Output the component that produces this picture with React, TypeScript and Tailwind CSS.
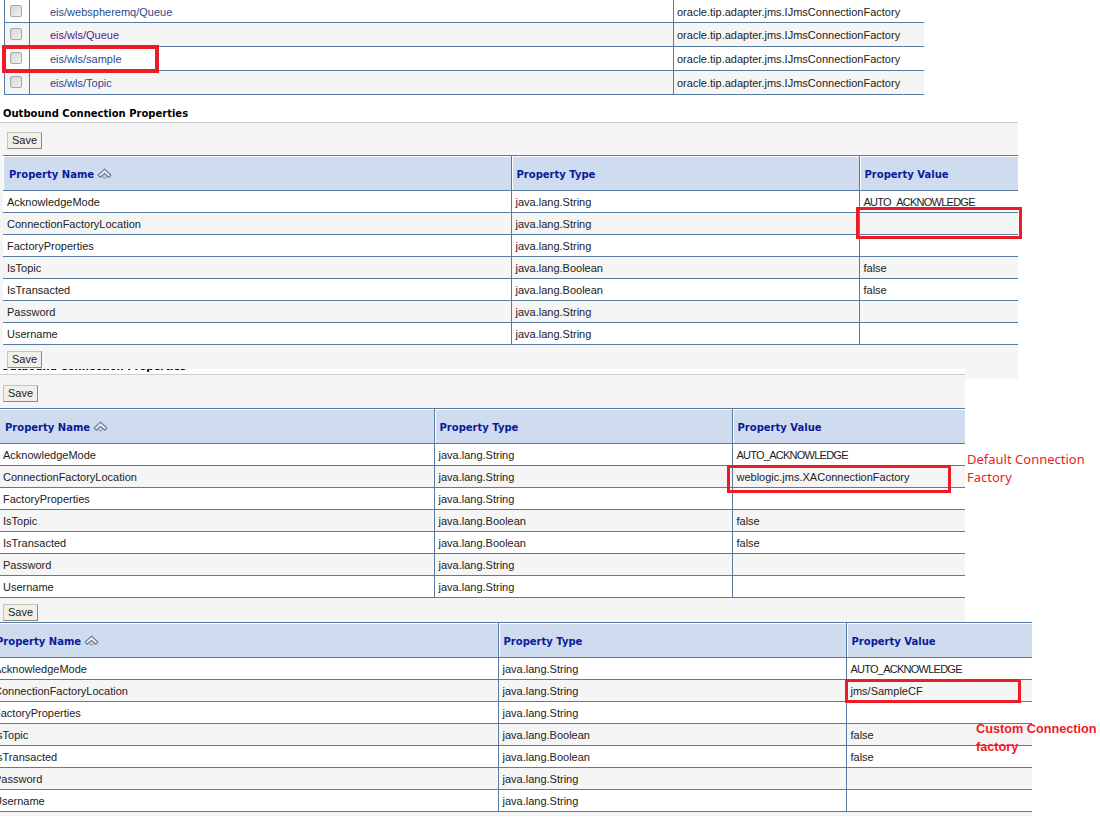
import React from "react";

const font = "font-['Liberation_Sans',sans-serif]";
const rowLine = "border-b border-[#5a7ba0]";

const baseRows = [
  ["AcknowledgeMode", "java.lang.String", "AUTO_ACKNOWLEDGE"],
  ["ConnectionFactoryLocation", "java.lang.String", ""],
  ["FactoryProperties", "java.lang.String", ""],
  ["IsTopic", "java.lang.Boolean", "false"],
  ["IsTransacted", "java.lang.Boolean", "false"],
  ["Password", "java.lang.String", ""],
  ["Username", "java.lang.String", ""],
];

const SortIcon = () => (
  <svg width="15" height="11" viewBox="0 0 14 10" className="inline-block ml-[3px] -mt-[2px]" fill="none">
    <path d="M7 1 13 6.5 11 8.5 7 5 3 8.5 1 6.5Z" fill="#e6ecf5" stroke="#62758f" strokeWidth="1" />
    <path d="M4.5 7.5 7 9.5 9.5 7.5" stroke="#8a9ab0" strokeWidth="1" />
  </svg>
);

const SaveButton = ({ className }: { className: string }) => (
  <button className={`h-[17px] w-[35px] flex items-center justify-center bg-[#f0f0e8] border border-[#c4c4b8] border-b-[#8a8a80] border-r-[#8a8a80] rounded-[1px] text-[11px] text-[#222] ${className}`}>
    Save
  </button>
);

function PropsTable({ cols, ml, value, width }: { cols: string[]; ml: string; value?: string; width: string }) {
  return (
    <table className={`table-fixed border-collapse border-t border-[#5a7ba0] ${ml} ${width} text-[11px] text-[#222]`}>
      <colgroup>
        <col className={cols[0]} />
        <col className={cols[1]} />
        <col />
      </colgroup>
      <thead>
        <tr className={`h-[35px] bg-[#cfdbee] ${rowLine}`}>
          {["Property Name", "Property Type", "Property Value"].map((h, i) => (
            <th key={h} className={`pt-[3px] text-left text-[10px] font-bold whitespace-nowrap font-['DejaVu_Sans',sans-serif] text-[#0a1a9a] shadow-[inset_1px_1px_0_#fff] ${i > 0 ? "pl-[5px] border-l border-[#5a7ba0]" : "pl-[6px]"}`}>
              {h}
              {i === 0 && <SortIcon />}
            </th>
          ))}
        </tr>
      </thead>
      <tbody>
        {baseRows.map((r, i) => (
          <tr key={r[0]} className={`h-[22px] ${rowLine} ${i % 2 ? "bg-[#f5f5f5]" : "bg-white"}`}>
            <td className="pl-[4px] pt-[2px] whitespace-nowrap">{r[0]}</td>
            <td className="pl-[4px] pt-[2px] border-l border-[#5a7ba0]">{r[1]}</td>
            <td className={`pl-[4px] pt-[2px] border-l border-[#5a7ba0] whitespace-nowrap ${i === 0 ? "tracking-[-0.75px]" : ""}`}>{i === 1 ? value : r[2]}</td>
          </tr>
        ))}
      </tbody>
    </table>
  );
}

const Checkbox = () => (
  <span className="block w-[12px] h-[12px] ml-[5px] rounded-[2px] border border-[#a9a9a9] bg-gradient-to-br from-[#d4d4d4] to-[#f2f2f2]" />
);

const links = [
  { label: "eis/webspheremq/Queue", color: "text-[#2a4a8f]" },
  { label: "eis/wls/Queue", color: "text-[#5a1a8b]" },
  { label: "eis/wls/sample", color: "text-[#2a4a8f]" },
  { label: "eis/wls/Topic", color: "text-[#2a4a8f]" },
];

export default function App() {
  return (
    <div className={`relative w-[1100px] h-[827px] overflow-hidden bg-white ${font}`}>
      {/* connection factory list */}
      <table className="table-fixed border-collapse ml-1 w-[920px] text-[11px] border-l border-[#5a7ba0]">
        <colgroup>
          <col className="w-[25px]" />
          <col className="w-[644px]" />
          <col />
        </colgroup>
        <tbody>
          {links.map((l, i) => (
            <tr key={l.label} className={`${i === 0 ? "h-[22px]" : "h-[24px]"} ${rowLine} ${i % 2 ? "bg-[#f5f5f5]" : "bg-white"}`}>
              <td><Checkbox /></td>
              <td className={`pl-5 pt-[2px] border-l border-[#5a7ba0] ${l.color}`}>{l.label}</td>
              <td className="pl-[3px] pt-[2px] border-l border-[#5a7ba0] text-[#222]">oracle.tip.adapter.jms.IJmsConnectionFactory</td>
            </tr>
          ))}
        </tbody>
      </table>

      <h2 className="mt-[12px] ml-[3px] h-[15px] text-[10px] leading-[14px] font-bold font-['DejaVu_Sans',sans-serif] text-black">
        Outbound Connection Properties
      </h2>

      {/* first panel, no factory set */}
      <div className="w-[1018px] h-[257px] bg-[#f5f5f5] border-t border-[#ccc] pt-[9px]">
        <SaveButton className="ml-[7px]" />
        <div className="h-[6px]" />
        <PropsTable cols={["w-[508px]", "w-[348px]"]} ml="ml-[3px]" width="w-[1015px]" />
        <SaveButton className="ml-[7px] mt-[6px]" />
      </div>

      {/* second panel, pasted over the one above */}
      <div className="-mt-[10px] w-[965px] h-[5px] bg-white relative overflow-hidden">
        <p className="-mt-[9px] ml-[1px] text-[10px] leading-[14px] font-bold font-['DejaVu_Sans',sans-serif] text-black">
          Outbound Connection Properties
        </p>
      </div>
      <div className="relative w-[965px] h-[248px] bg-[#f5f5f5] border-t border-[#ccc] pt-[10px]">
        <SaveButton className="ml-[3px]" />
        <div className="h-[6px]" />
        <PropsTable cols={["w-[435px]", "w-[298px]"]} ml="-ml-px" width="w-[966px]" value="weblogic.jms.XAConnectionFactory" />
        <SaveButton className="ml-[3px] mt-[6px]" />
      </div>

      {/* third panel, table runs past the left edge */}
      <div className="relative w-[1032px] h-[194px] bg-[#f5f5f5] overflow-hidden">
        <PropsTable cols={["w-[508px]", "w-[348px]"]} ml="-ml-[10px]" width="w-[1042px]" value="jms/SampleCF" />
      </div>

      {/* annotations */}
      <div className="absolute left-[2px] top-[45px] w-[157px] h-[28px] border-[4px] border-[#ed1c24]" />
      <div className="absolute left-[856px] top-[207px] w-[166px] h-[32px] border-[3px] border-[#ed1c24]" />
      <div className="absolute left-[727px] top-[465px] w-[224px] h-[28px] border-[3px] border-[#ed1c24]" />
      <div className="absolute left-[845px] top-[679px] w-[176px] h-[24px] border-[3px] border-[#ed1c24]" />
      <p className="absolute left-[967px] top-[450px] w-[130px] text-[13px] leading-[18px] text-[#ed1c24] font-['Noto_Sans',sans-serif]">
        Default Connection Factory
      </p>
      <p className="absolute left-[976px] top-[720px] w-[124px] text-[12.7px] leading-[18px] font-bold text-[#ed1c24] font-['Liberation_Sans',sans-serif]">
        Custom Connection factory
      </p>
    </div>
  );
}
